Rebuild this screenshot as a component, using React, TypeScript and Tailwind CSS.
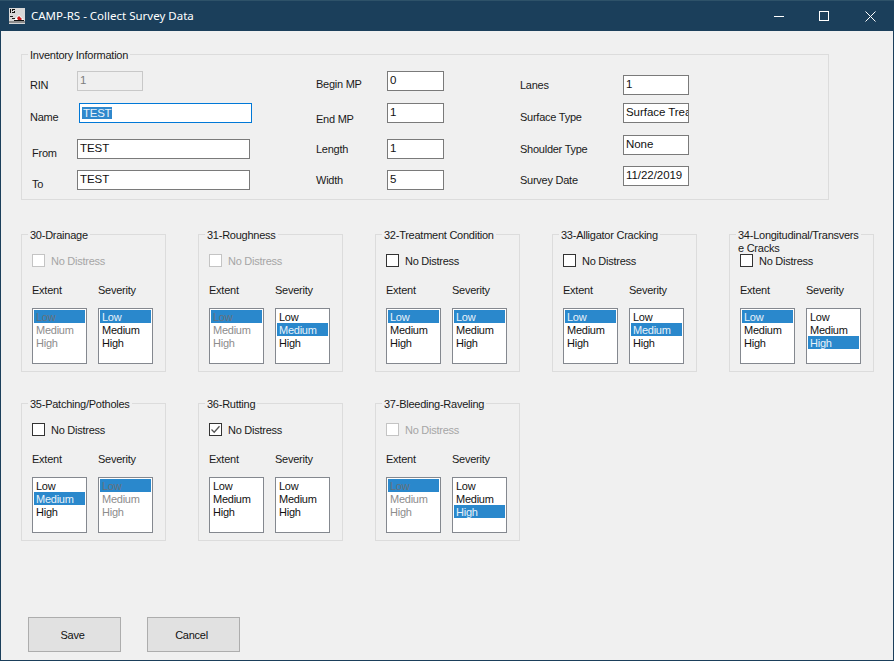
const FONT = "font-['Liberation_Sans',Arial,sans-serif]";

function Fieldset({ title, className, children }: { title: string; className: string; children: React.ReactNode }) {
  return (
    <div className={`relative border border-[#dcdcdc] ${className}`}>
      <div className="absolute left-[6px] top-[-7px] bg-[#f0f0f0] px-[2px] text-[#1a1a1a] leading-[14px] whitespace-nowrap">{title}</div>
      {children}
    </div>
  );
}

function Label({ text, className = "" }: { text: string; className?: string }) {
  return <div className={`h-[14px] leading-[14px] text-[#1a1a1a] whitespace-nowrap ${className}`}>{text}</div>;
}

function Box({ value, className = "" }: { value: string; className?: string }) {
  return (
    <div className={`h-[20px] border border-[#7a7a7a] bg-white pl-[2px] text-[11.5px] leading-[17px] tracking-[-0.05px] text-[#111] overflow-hidden whitespace-nowrap ${className}`}>
      {value}
    </div>
  );
}

function ListBox({ sel, disabled }: { sel: number; disabled?: boolean }) {
  return (
    <div className="h-[56px] w-[55px] border border-[#84888f] bg-white p-[1px]">
      {["Low", "Medium", "High"].map((t, i) => (
        <div
          key={t}
          className={`h-[13px] pl-[2px] leading-[15px] ${
            i === sel
              ? disabled
                ? "bg-[#2a88cc] text-[#66727c]"
                : "bg-[#2a88cc] text-[#e8f2fa]"
              : disabled
                ? "text-[#8d8d8d]"
                : "text-[#111]"
          }`}
        >
          {t}
        </div>
      ))}
    </div>
  );
}

type G = { title: string; ext: number; sev: number; cbOff?: boolean; extOff?: boolean; sevOff?: boolean; checked?: boolean; wrap?: boolean };

function Group({ title, ext, sev, cbOff, extOff, sevOff, checked, wrap }: G) {
  return (
    <Fieldset title={title} className="h-[138px] w-[145px]">
      {wrap && <div className="absolute left-[6px] top-[6px] px-[2px] leading-[14px] text-[#1a1a1a]">e Cracks</div>}
      <div className="flex flex-col pl-[10px] pt-[19px]">
        <div className="flex h-[13px] items-center gap-[6px]">
          <div className={`flex h-[13px] w-[13px] items-center justify-center border bg-white ${cbOff ? "border-[#c4c4c4]" : "border-[#333]"}`}>
            {checked && (
              <svg viewBox="0 0 11 11" className="h-[11px] w-[11px]">
                <path d="M1.5 5.5 L4.2 8.2 L9.5 2.2" fill="none" stroke="#555" strokeWidth="1.3" />
              </svg>
            )}
          </div>
          <span className={`pt-[2px] leading-[13px] ${cbOff ? "text-[#a6a6a6]" : "text-[#1a1a1a]"}`}>No Distress</span>
        </div>
        <div className="mt-[16px] flex gap-[11px]">
          <div className="w-[55px] leading-[14px] text-[#1a1a1a]">Extent</div>
          <div className="w-[55px] leading-[14px] text-[#1a1a1a]">Severity</div>
        </div>
        <div className="mt-[11px] flex gap-[11px]">
          <ListBox sel={ext} disabled={extOff} />
          <ListBox sel={sev} disabled={sevOff} />
        </div>
      </div>
    </Fieldset>
  );
}

const row1: G[] = [
  { title: "30-Drainage", ext: 0, sev: 0, cbOff: true, extOff: true },
  { title: "31-Roughness", ext: 0, sev: 1, cbOff: true, extOff: true },
  { title: "32-Treatment Condition", ext: 0, sev: 0 },
  { title: "33-Alligator Cracking", ext: 0, sev: 1 },
  { title: "34-Longitudinal/Transvers", ext: 0, sev: 2, wrap: true },
];
const row2: G[] = [
  { title: "35-Patching/Potholes", ext: 1, sev: 0, sevOff: true },
  { title: "36-Rutting", ext: -1, sev: -1, checked: true },
  { title: "37-Bleeding-Raveling", ext: 0, sev: 2, cbOff: true, extOff: true },
];

export default function App() {
  return (
    <div className={`${FONT} flex h-[661px] w-[894px] flex-col border border-t-0 border-[#1b3f5b] bg-[#f0f0f0] text-[11px] tracking-[-0.25px]`}>
      <div className="mx-[-1px] flex h-[31px] shrink-0 items-center border-t border-[#2e5269] bg-[#1b3f5b] text-white">
        <svg viewBox="0 0 16 16" className="ml-[9px] h-[16px] w-[16px]">
          <rect width="16" height="16" fill="#d8d8d8" />
          <rect y="13" width="16" height="2" fill="#8c8c8c" />
          <path d="M1 1h1v4H1zM3 1h3v1H4v1h2v2H3V4h2V3H3z" fill="#111" />
          <path d="M1 8h3v1H1zM3 10h3v1H3z" fill="#222" />
          <path d="M5 12L10 7l5 5z" fill="#fff" />
          <path d="M5 12h10v1H5z" fill="#111" />
          <path d="M10 8l3 3-1 1H9l-1-2z" fill="#c81e1e" />
        </svg>
        <div className="ml-[6px] font-['Noto_Sans',sans-serif] text-[11.5px] leading-[16px] tracking-normal">CAMP-RS - Collect Survey Data</div>
        <div className="ml-auto flex items-center">
          <svg viewBox="0 0 46 31" className="h-[31px] w-[46px]">
            <path d="M18 15.5h10" stroke="#fff" strokeWidth="1" />
          </svg>
          <svg viewBox="0 0 46 31" className="h-[31px] w-[46px]">
            <rect x="17.5" y="10.5" width="9" height="9" fill="none" stroke="#fff" strokeWidth="1" />
          </svg>
          <svg viewBox="0 0 46 31" className="h-[31px] w-[46px]">
            <path d="M17.5 10.5l10 10M27.5 10.5l-10 10" stroke="#fff" strokeWidth="1" />
          </svg>
        </div>
      </div>

      <div className="flex flex-1 flex-col pl-[20px]">
        <Fieldset title="Inventory Information" className="mt-[23px] h-[146px] w-[808px]">
          <div className="flex items-start">
            <div className="ml-[8px] flex w-[47px] flex-col pt-[23px]">
              <Label text="RIN" />
              <Label text="Name" className="mt-[18px]" />
              <Label text="From" className="ml-[2px] mt-[22px]" />
              <Label text="To" className="ml-[2px] mt-[17px]" />
            </div>
            <div className="flex w-[175px] flex-col pt-[16px]">
              <Box value="1" className="w-[66px] !border-[#c8c8c8] !bg-[#efefef] !text-[#7d7d7d]" />
              <div className="ml-[2px] mt-[12px] h-[20px] w-[173px] border border-[#0078d7] bg-white pl-[2px] text-[11.5px] leading-[19px]">
                <span className="bg-[#3088cc] px-[1px] text-[#e8f2fa]">TEST</span>
              </div>
              <Box value="TEST" className="mt-[16px] w-[173px]" />
              <Box value="TEST" className="mt-[11px] w-[173px]" />
            </div>
            <div className="ml-[64px] flex w-[71px] flex-col pt-[22px]">
              <Label text="Begin MP" />
              <Label text="End MP" className="mt-[21px]" />
              <Label text="Length" className="mt-[16px]" />
              <Label text="Width" className="mt-[17px]" />
            </div>
            <div className="flex w-[57px] flex-col pt-[16px]">
              <Box value="0" />
              <Box value="1" className="mt-[12px]" />
              <Box value="1" className="mt-[16px]" />
              <Box value="5" className="mt-[11px]" />
            </div>
            <div className="ml-[76px] flex w-[103px] flex-col pt-[23px]">
              <Label text="Lanes" />
              <Label text="Surface Type" className="mt-[18px]" />
              <Label text="Shoulder Type" className="mt-[18px]" />
              <Label text="Survey Date" className="mt-[17px]" />
            </div>
            <div className="flex w-[66px] flex-col pt-[20px]">
              <Box value="1" />
              <Box value="Surface Treatment" className="mt-[8px]" />
              <Box value="None" className="mt-[12px]" />
              <Box value="11/22/2019" className="mt-[11px]" />
            </div>
          </div>
        </Fieldset>

        <div className="mt-[34px] flex gap-[32px]">
          {row1.map((g) => (
            <Group key={g.title} {...g} />
          ))}
        </div>
        <div className="mt-[31px] flex gap-[32px]">
          {row2.map((g) => (
            <Group key={g.title} {...g} />
          ))}
        </div>

        <div className="ml-[7px] mt-[76px] flex gap-[26px]">
          {["Save", "Cancel"].map((t) => (
            <div key={t} className="flex h-[35px] w-[93px] items-center justify-center border border-[#adadad] bg-[#e1e1e1] pr-[4px] pt-[1px] text-[#111]">
              {t}
            </div>
          ))}
        </div>
      </div>
    </div>
  );
}
